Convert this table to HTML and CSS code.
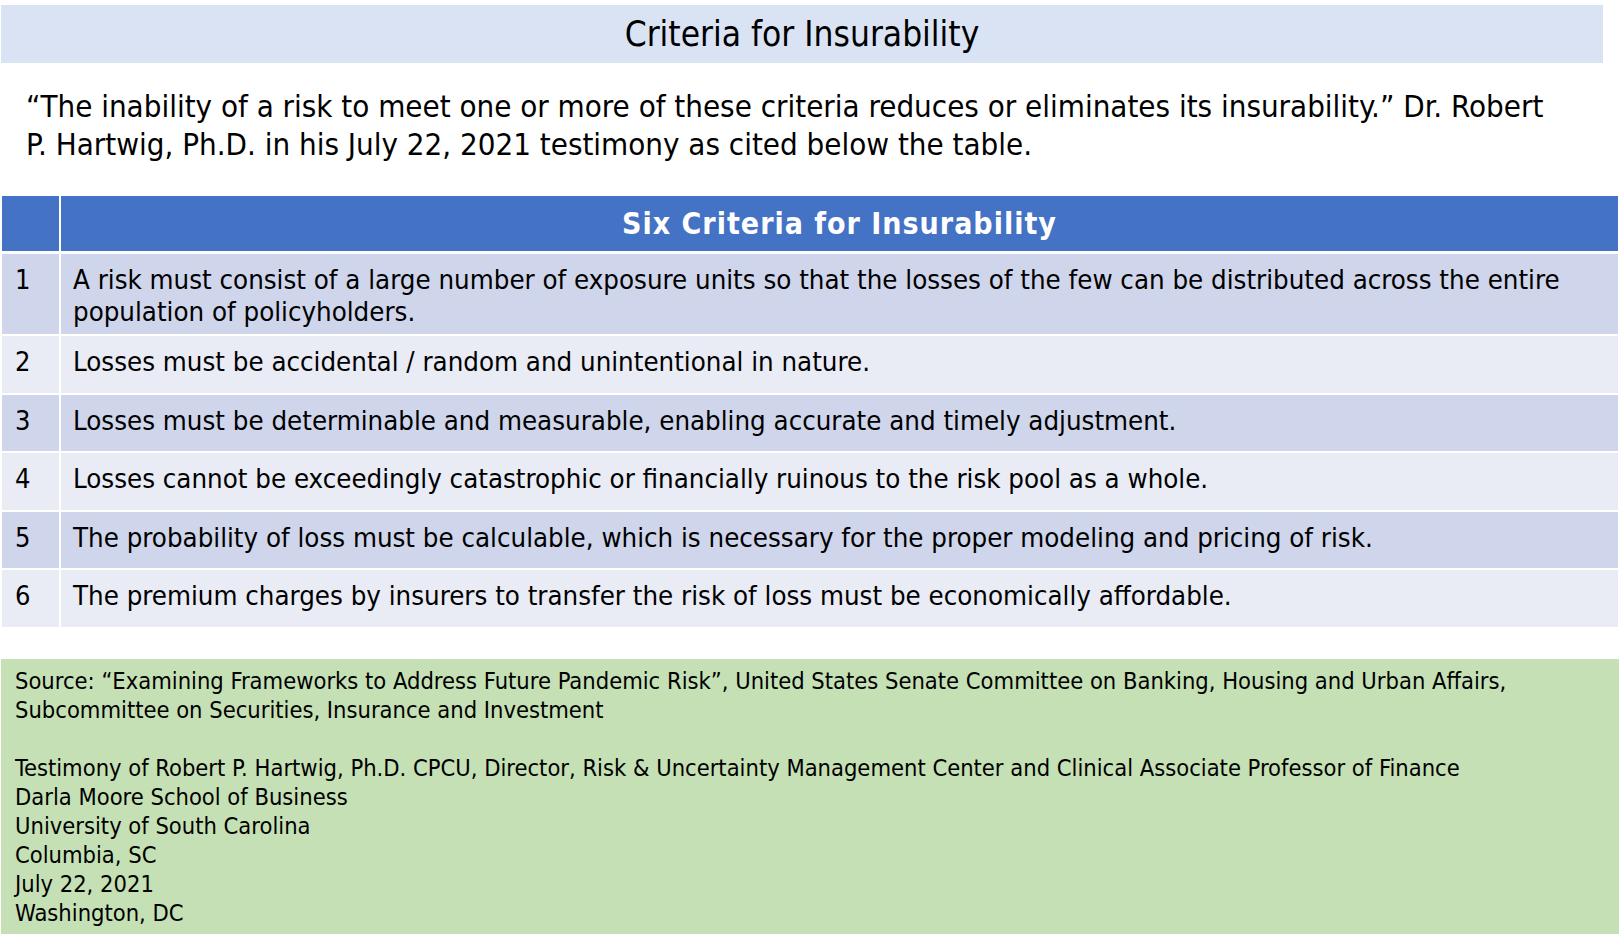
FILE: index.html
```html
<!DOCTYPE html>
<html lang="en">
<head>
<meta charset="utf-8">
<title>Criteria for Insurability</title>
<link rel="stylesheet" href="styles.css">
</head>
<body>
<div class="page">
  <header class="title-band">
    <h1 class="title">Criteria for Insurability</h1>
  </header>
  <p class="quote">“The inability of a risk to meet one or more of these criteria reduces or eliminates its insurability.” Dr. Robert P. Hartwig, Ph.D. in his July 22, 2021 testimony as cited below the table.</p>
  <div class="criteria">
    <div class="row head">
      <div class="num"></div>
      <div class="text">Six Criteria for Insurability</div>
    </div>
    <div class="row odd first">
      <div class="num">1</div>
      <div class="text">A risk must consist of a large number of exposure units so that the losses of the few can be distributed across the entire population of policyholders.</div>
    </div>
    <div class="row even">
      <div class="num">2</div>
      <div class="text">Losses must be accidental / random and unintentional in nature.</div>
    </div>
    <div class="row odd">
      <div class="num">3</div>
      <div class="text">Losses must be determinable and measurable, enabling accurate and timely adjustment.</div>
    </div>
    <div class="row even">
      <div class="num">4</div>
      <div class="text">Losses cannot be exceedingly catastrophic or financially ruinous to the risk pool as a whole.</div>
    </div>
    <div class="row odd">
      <div class="num">5</div>
      <div class="text">The probability of loss must be calculable, which is necessary for the proper modeling and pricing of risk.</div>
    </div>
    <div class="row even">
      <div class="num">6</div>
      <div class="text">The premium charges by insurers to transfer the risk of loss must be economically affordable.</div>
    </div>
  </div>
  <div class="source">
    <p>Source: “Examining Frameworks to Address Future Pandemic Risk”, United States Senate Committee on Banking, Housing and Urban Affairs, Subcommittee on Securities, Insurance and Investment</p>
    <p>Testimony of Robert P. Hartwig, Ph.D. CPCU, Director, Risk &amp; Uncertainty Management Center and Clinical Associate Professor of Finance<br>Darla Moore School of Business<br>University of South Carolina<br>Columbia, SC<br>July 22, 2021<br>Washington, DC</p>
  </div>
</div>
</body>
</html>
```
FILE: styles.css
```css
html, body {
  margin: 0;
  padding: 0;
  background: #ffffff;
}
body {
  font-family: "DejaVu Sans Condensed", "DejaVu Sans", sans-serif;
  color: #000000;
}
.page {
  width: 1624px;
  height: 940px;
  display: flex;
  flex-direction: column;
  padding-top: 5px;
  box-sizing: border-box;
}
.title-band {
  margin-left: 1px;
  width: 1602px;
  height: 58px;
  flex: none;
  background: #dae3f3;
  display: flex;
  align-items: center;
  justify-content: center;
}
.title {
  margin: 0;
  font-weight: normal;
  font-size: 35px;
  line-height: 1;
}
.quote {
  margin: 24px 0 0 26px;
  width: 1540px;
  font-size: 31px;
  line-height: 38px;
}
.criteria {
  margin: 33px 0 0 2px;
  width: 1616px;
  display: flex;
  flex-direction: column;
  gap: 2px;
}
.row {
  display: flex;
  gap: 2px;
  height: 56.5px;
  flex: none;
}
.row .num {
  width: 57px;
  flex: none;
  box-sizing: border-box;
  padding: 10px 0 0 13px;
  font-size: 27px;
  line-height: 32px;
}
.row .text {
  flex: 1;
  box-sizing: border-box;
  padding: 10px 30px 0 12px;
  font-size: 27.4px;
  line-height: 32px;
}
.row.odd > div { background: #cfd5ea; }
.row.even > div { background: #e9ebf5; }
.row.head {
  height: 55px;
  margin-bottom: 1px;
}
.row.head > div { background: #4472c4; }
.row.head .text {
  color: #ffffff;
  font-weight: bold;
  text-align: center;
  padding: 0;
  display: flex;
  align-items: center;
  justify-content: center;
  font-size: 30px;
  letter-spacing: 1px;
}
.row.first { height: 80px; }
.source {
  margin: 32.5px 0 0 1px;
  width: 1618px;
  height: 275px;
  flex: none;
  box-sizing: border-box;
  background: #c5e0b4;
  padding: 8px 14px 0 14px;
  font-size: 23.5px;
  line-height: 29px;
}
.source p {
  margin: 0 0 29px 0;
}
```
